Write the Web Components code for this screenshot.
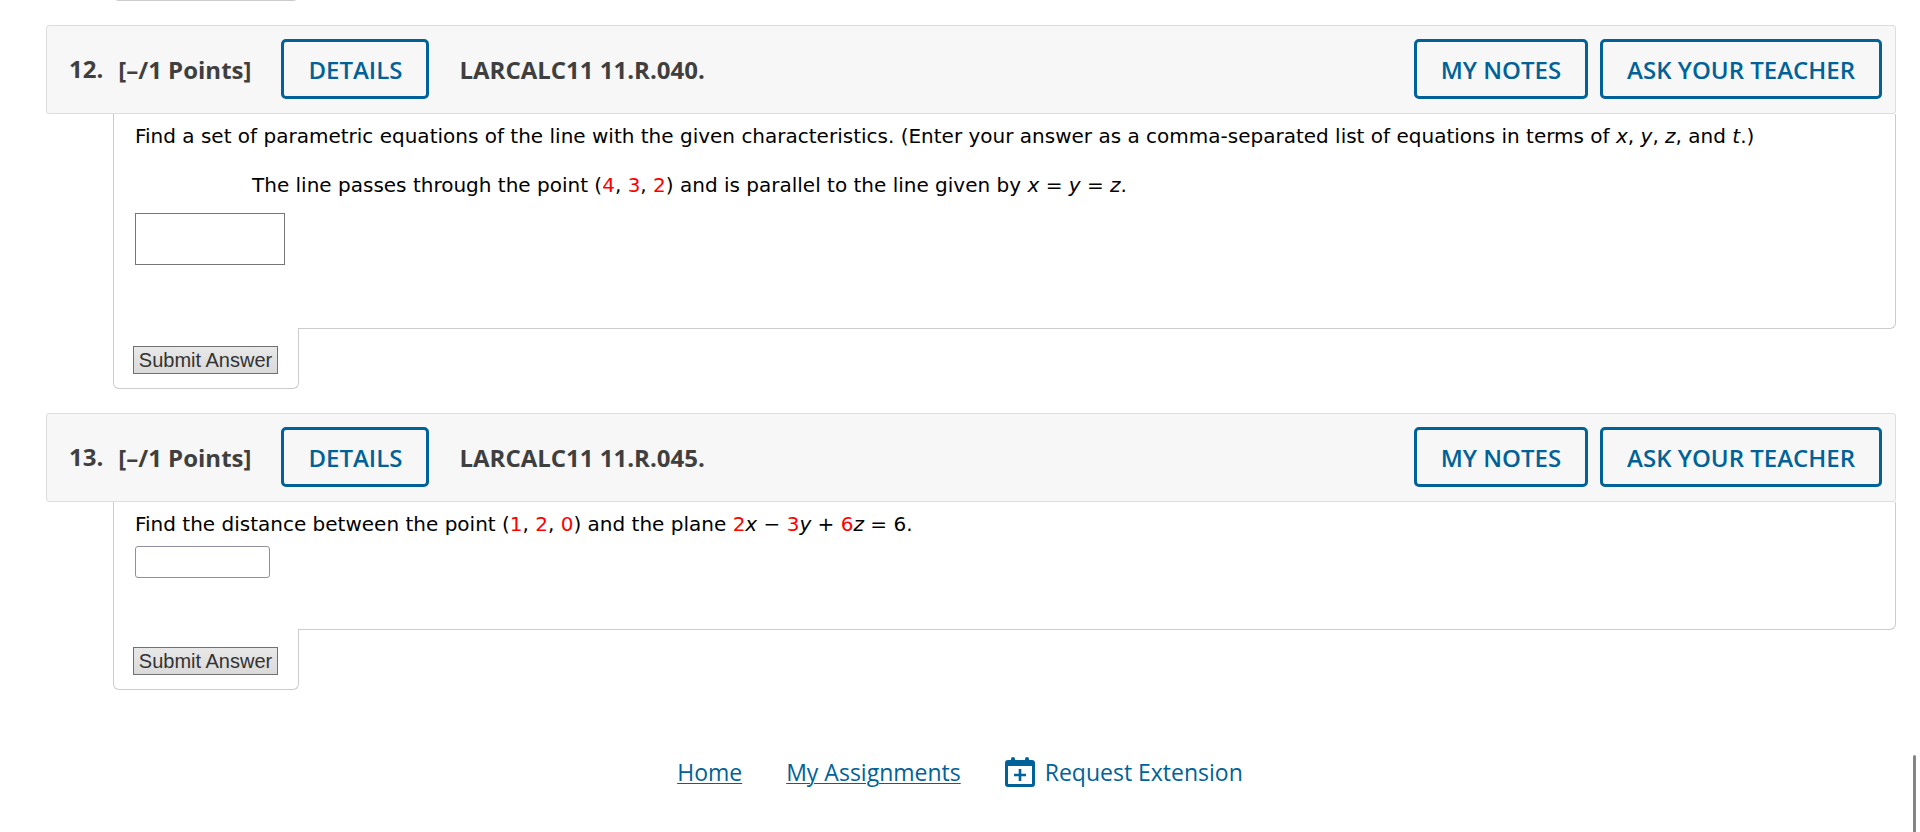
<!DOCTYPE html>
<html lang="en">
<head>
<meta charset="utf-8">
<title>Assignment</title>
<style>
html,body{margin:0;background:#fff}
body{font-family:Verdana,"DejaVu Sans",sans-serif;color:#000}
html{scrollbar-width:none}
</style>
</head>
<body>
<assignment-page>
  <question-card number="12" code="LARCALC11 11.R.040." field="area">
    <p>Find a set of parametric equations of the line with the given characteristics. (Enter your answer as a comma-separated list of equations in terms of <i>x</i>, <i>y</i>, <i>z</i>, and <i>t</i>.)</p>
    <p class="indent">The line passes through the point (<random-value>4</random-value>, <random-value>3</random-value>, <random-value>2</random-value>) and is parallel to the line given by <i>x</i> = <i>y</i> = <i>z</i>.</p>
  </question-card>
  <question-card number="13" code="LARCALC11 11.R.045." field="line">
    <p>Find the distance between the point (<random-value>1</random-value>, <random-value>2</random-value>, <random-value>0</random-value>) and the plane <random-value>2</random-value><i>x</i> − <random-value>3</random-value><i>y</i> + <random-value>6</random-value><i>z</i> = 6.</p>
  </question-card>
  <page-links slot="footer"></page-links>
</assignment-page>
<script>
const define = (name, html, setup) => customElements.define(name, class extends HTMLElement {
  constructor() {
    super();
    const root = this.attachShadow({mode: "open"});
    const t = document.createElement("template");
    t.innerHTML = html;
    root.append(t.content.cloneNode(true));
    if (setup) setup(this, root);
  }
});

define("random-value", `<style>:host{display:inline;color:#f00}</style><slot></slot>`);

define("outline-button", `
<style>
:host{display:block}
button{box-sizing:border-box;height:60px;padding:2px 24px 0;border:3px solid #006298;border-radius:5px;background:none;color:#006298;font:600 24px/52px "Open Sans",sans-serif;white-space:nowrap;display:block}
</style>
<button type="button"><slot></slot></button>`);

define("question-card", `
<style>
:host{display:block;margin-bottom:24px}
header{box-sizing:border-box;display:flex;align-items:center;height:89px;padding:0 13px 1px 22px;border:1px solid #ddd;border-radius:3px;background:#f7f7f7;color:#3f3f3f;font:700 24px/32px "Open Sans",sans-serif}
h2{margin:0;font:inherit;white-space:pre}
.points{margin:0 30px 0 15px;padding-top:2px}
.code{margin:0 auto 0 30px;padding-top:2px}
.notes{margin-right:12px}
.body{box-sizing:border-box;min-height:128px;margin-left:67px;padding:8px 21px 51px;border:1px solid #ccc;border-top:0;border-radius:0 0 6px 0;font-size:20px;line-height:28px}
:host([field=area]) .body{min-height:215px}
::slotted(p){margin:0 0 8px}
::slotted(p.indent){margin:21px 0 14px 117px}
textarea,input{box-sizing:border-box;display:block;border:1px solid #767676;background:#fff;resize:none;font:20px "DejaVu Sans",sans-serif}
textarea{width:150px;height:52px}
input{width:135px;height:32px;border-color:#8f8f9d;border-radius:3px}
/* the tab overlaps the panel's bottom border by one pixel so the two read as one outline */
.tab{box-sizing:border-box;width:186px;height:61px;margin:-1px 0 0 67px;padding:18px 0 0 19px;position:relative;background:#fff;border:1px solid #ccc;border-top:0;border-radius:0 0 6px 6px}
.tab button{box-sizing:border-box;width:145px;height:28px;padding:0;border:1px solid #707070;background:linear-gradient(#e8e8e8,#dadada);color:#333;font:20px/26px "Liberation Sans",sans-serif;white-space:nowrap;display:block}
</style>
<section>
<header><h2 class="num"></h2><h2 class="points">[–/1 Points]</h2><outline-button>DETAILS</outline-button><h2 class="code"></h2><outline-button class="notes">MY NOTES</outline-button><outline-button>ASK YOUR TEACHER</outline-button></header>
<div class="body"><slot></slot><div class="field"></div></div>
<div class="tab"><button type="submit">Submit Answer</button></div>
</section>`, (el, root) => {
  root.querySelector(".num").textContent = el.getAttribute("number") + ".";
  root.querySelector(".code").textContent = el.getAttribute("code");
  const f = document.createElement(el.getAttribute("field") === "area" ? "textarea" : "input");
  f.setAttribute("aria-label", "Answer to question " + el.getAttribute("number"));
  root.querySelector(".field").append(f);
});

define("page-links", `
<style>
:host{display:block}
nav{display:flex;justify-content:center;align-items:center;gap:44px;font:23px/34px "Open Sans",sans-serif}
a{color:#006298;text-underline-offset:2px;text-decoration-thickness:1px}
.ext{display:flex;align-items:center;gap:10px;text-decoration:none}
svg{display:block}
</style>
<nav aria-label="Page"><a href="#home">Home</a><a href="#assignments">My Assignments</a><a class="ext" href="#extension"><svg width="30" height="30" viewBox="0 0 30 30" fill="#006298"><path fill-rule="evenodd" d="M3 3h3V2a2 2 0 0 1 4 0v1h10V2a2 2 0 0 1 4 0v1h3a3 3 0 0 1 3 3v21a3 3 0 0 1-3 3H3a3 3 0 0 1-3-3V6a3 3 0 0 1 3-3zM3 9v18h24V9z"/><path d="M13.700 12h2.600v4.700H21v2.600h-4.700V24h-2.600v-4.700H9v-2.600h4.700z"/></svg>Request Extension</a></nav>`);

define("assignment-page", `
<style>
:host{display:block}
.content{padding:0 24px 0 46px}
.previous{box-sizing:border-box;width:186px;height:8px;margin:-7px 0 24px 67px;border:1px solid #ccc;border-top:0;border-radius:0 0 6px 6px}
.foot{margin-top:65px}
.thumb{position:fixed;right:4px;top:755px;bottom:0;width:3px;background:#858585;border-radius:2px 2px 0 0}
</style>
<main class="content"><div class="previous"></div><slot></slot></main>
<footer class="foot"><slot name="footer"></slot></footer>
<div class="thumb"></div>`);
</script>
</body>
</html>
